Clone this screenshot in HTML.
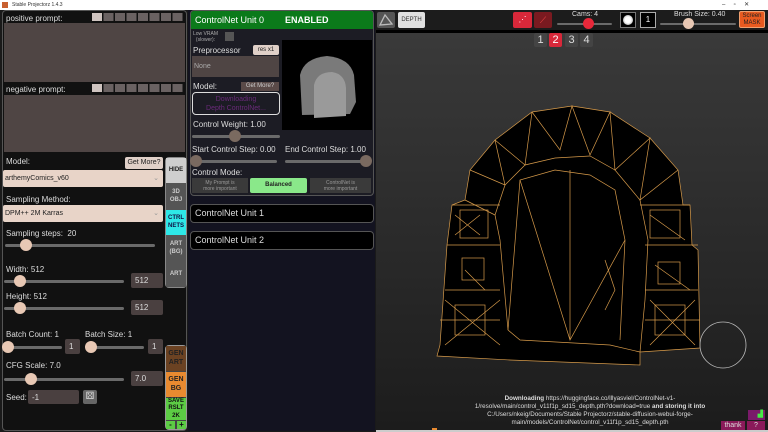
<!DOCTYPE html><html><head><style>
*{box-sizing:border-box;margin:0;padding:0}
body{width:768px;height:432px;overflow:hidden;background:#1a1a1a;font-family:"Liberation Sans",sans-serif;color:#ddd;position:relative;font-size:8px}
.a{position:absolute}
.lbl{position:absolute;font-size:8px;color:#ddd}
.trk{position:absolute;height:3px;background:#6a6a6a;border-radius:2px}
.kn{position:absolute;width:12px;height:12px;border-radius:50%;background:#e8c8b4}
.box{position:absolute;background:#4a4040;color:#ddd;font-size:8px;padding:3px 4px;border-radius:2px}
.sb{position:absolute;left:166px;width:20px;font-size:6px;font-weight:bold;text-align:center;display:flex;align-items:center;justify-content:center;line-height:1.2}
</style></head><body>
<div class="a" style="left:0;top:0;width:768px;height:10px;background:#fff;color:#333;font-size:5px;padding:2px 0 0 12px">Stable Projectorz 1.4.3<div class="a" style="left:2px;top:2px;width:6px;height:6px;background:#c86030"></div><span class="a" style="left:722px;top:1px;font-size:6px">–&nbsp;&nbsp;&nbsp;&nbsp;&nbsp;▫&nbsp;&nbsp;&nbsp;&nbsp;&nbsp;✕</span></div>
<!-- left panel -->
<div class="a" style="left:2px;top:10px;width:185px;height:421px;background:#111;border:1px solid #555;border-radius:4px"></div>
<div class="lbl" style="left:6px;top:14px">positive prompt:</div>
<div class="a" style="left:92px;top:13px;width:92px;height:8px;background:repeating-linear-gradient(90deg,#6a6262 0 10px,#111 10px 11.5px)"></div>
<div class="a" style="left:92px;top:13px;width:10px;height:8px;background:#cfc4c0"></div>
<div class="a" style="left:4px;top:23px;width:181px;height:59px;background:#4f4544"></div>
<div class="lbl" style="left:6px;top:85px">negative prompt:</div>
<div class="a" style="left:92px;top:84px;width:92px;height:8px;background:repeating-linear-gradient(90deg,#6a6262 0 10px,#111 10px 11.5px)"></div>
<div class="a" style="left:92px;top:84px;width:10px;height:8px;background:#cfc4c0"></div>
<div class="a" style="left:4px;top:95px;width:181px;height:57px;background:#4f4544"></div>
<div class="lbl" style="left:6px;top:157px">Model:</div>
<div class="a" style="left:125px;top:157px;width:38px;height:12px;background:#e0d0c8;color:#222;font-size:7px;text-align:center;line-height:12px;border-radius:2px">Get More?</div>
<div class="a" style="left:3px;top:170px;width:160px;height:17px;background:#e8d4c8;color:#222;font-size:7px;line-height:17px;padding-left:2px;border-radius:2px">arthemyComics_v60<span style="float:right;margin-right:4px;color:#999">⌄</span></div>
<div class="lbl" style="left:6px;top:195px">Sampling Method:</div>
<div class="a" style="left:3px;top:205px;width:160px;height:17px;background:#e8d4c8;color:#222;font-size:7px;line-height:17px;padding-left:2px;border-radius:2px">DPM++ 2M Karras<span style="float:right;margin-right:4px;color:#999">⌄</span></div>
<div class="a" style="left:165px;top:157px;width:22px;height:131px;border:1px solid #888;border-radius:4px;background:#555"></div>
<div class="sb" style="top:158px;height:25px;background:#cfcfcf;color:#222">HIDE</div>
<div class="sb" style="top:184px;height:25px;background:#555;color:#ccc">3D<br>OBJ</div>
<div class="sb" style="top:210px;height:25px;background:#2ee8e8;color:#114">CTRL<br>NETS</div>
<div class="sb" style="top:236px;height:25px;background:#555;color:#ccc">ART<br>(BG)</div>
<div class="sb" style="top:262px;height:25px;background:#555;color:#ccc">ART</div>
<div class="lbl" style="left:6px;top:229px">Sampling steps:&nbsp; 20</div>
<div class="trk" style="left:5px;top:244px;width:150px"></div><div class="kn" style="left:20px;top:239px"></div>
<div class="lbl" style="left:6px;top:265px">Width: 512</div>
<div class="trk" style="left:4px;top:280px;width:120px"></div><div class="kn" style="left:14px;top:275px"></div>
<div class="box" style="left:131px;top:273px;width:32px;height:15px">512</div>
<div class="lbl" style="left:6px;top:292px">Height: 512</div>
<div class="trk" style="left:4px;top:307px;width:120px"></div><div class="kn" style="left:14px;top:302px"></div>
<div class="box" style="left:131px;top:300px;width:32px;height:15px">512</div>
<div class="lbl" style="left:6px;top:330px">Batch Count: 1</div>
<div class="lbl" style="left:85px;top:330px">Batch Size: 1</div>
<div class="trk" style="left:4px;top:346px;width:58px"></div><div class="kn" style="left:2px;top:341px"></div>
<div class="box" style="left:65px;top:339px;width:15px;height:15px">1</div>
<div class="trk" style="left:86px;top:346px;width:58px"></div><div class="kn" style="left:85px;top:341px"></div>
<div class="box" style="left:148px;top:339px;width:15px;height:15px">1</div>
<div class="lbl" style="left:6px;top:361px">CFG Scale: 7.0</div>
<div class="trk" style="left:4px;top:378px;width:120px"></div><div class="kn" style="left:25px;top:373px"></div>
<div class="box" style="left:131px;top:371px;width:32px;height:15px">7.0</div>
<div class="lbl" style="left:6px;top:393px">Seed:</div>
<div class="box" style="left:28px;top:390px;width:51px;height:14px">-1</div>
<div class="a" style="left:83px;top:390px;width:14px;height:14px;background:#666;border-radius:2px;color:#ddd;font-size:10px;text-align:center;line-height:14px">⚄</div>
<div class="a" style="left:165px;top:345px;width:22px;height:85px;border:1px solid #999;border-radius:4px;background:#444"></div>
<div class="sb" style="top:346px;height:25px;background:#6b4222;color:#222;font-size:7px">GEN<br>ART</div>
<div class="sb" style="top:372px;height:25px;background:#e88a30;color:#222;font-size:7px">GEN<br>BG</div>
<div class="sb" style="top:398px;height:22px;background:#5ccc44;color:#111">SAVE<br>RSLT<br>2K</div>
<div class="sb" style="top:421px;width:9px;height:8px;background:#5ccc44;color:#111;font-size:8px">-</div>
<div class="sb" style="left:177px;top:421px;width:9px;height:8px;background:#5ccc44;color:#111;font-size:8px">+</div>
<!-- middle -->
<div class="a" style="left:188px;top:10px;width:187px;height:421px;background:#131320"></div>
<div class="a" style="left:190px;top:10px;width:184px;height:186px;background:#1c1c24;border:1px solid #555;border-radius:4px"></div>
<div class="a" style="left:191px;top:11px;width:182px;height:18px;background:#0b7a1a;border-radius:3px 3px 0 0;font-size:9px;color:#fff;line-height:18px;padding-left:4px">ControlNet Unit 0<b style="position:absolute;left:94px">ENABLED</b></div>
<div class="a" style="left:193px;top:31px;font-size:5px;color:#aaa;text-align:center;line-height:6px">Low VRAM<br>(slower):</div>
<div class="a" style="left:225px;top:32px;width:9px;height:9px;background:#555"></div>
<div class="lbl" style="left:193px;top:46px">Preprocessor</div>
<div class="a" style="left:253px;top:45px;width:26px;height:10px;background:#e0d0c8;color:#222;font-size:6px;text-align:center;line-height:10px;border-radius:2px">res x1</div>
<div class="a" style="left:192px;top:56px;width:87px;height:21px;background:#4f4544;color:#aaa;font-size:7px;line-height:21px;padding-left:2px">None</div>
<div class="lbl" style="left:193px;top:82px">Model:</div>
<div class="a" style="left:241px;top:82px;width:38px;height:9px;background:#5a4a48;color:#ccc;font-size:6px;text-align:center;line-height:9px">Get More?</div>
<div class="a" style="left:192px;top:92px;width:88px;height:23px;border:1px solid #ddd;border-radius:4px;color:#6a2a7a;font-size:7px;text-align:center;line-height:9px;padding-top:2px">Downloading<br>Depth ControlNet...</div>
<div class="a" style="left:282px;top:40px;width:90px;height:90px;background:#000"></div>
<svg class="a" style="left:282px;top:40px" width="90" height="90"><path d="M20 75 L18 35 Q22 18 45 16 Q68 18 72 35 L74 62 L68 74 Z" fill="#7a7a7a"/><path d="M32 78 L32 45 Q35 32 50 32 Q63 34 64 48 L64 76 Z" fill="#9a9a9a"/></svg>
<div class="lbl" style="left:193px;top:120px">Control Weight: 1.00</div>
<div class="trk" style="left:192px;top:135px;width:88px"></div><div class="kn" style="left:229px;top:130px;background:#7a6a60"></div>
<div class="lbl" style="left:192px;top:145px">Start Control Step: 0.00</div>
<div class="lbl" style="left:285px;top:145px">End Control Step: 1.00</div>
<div class="trk" style="left:192px;top:160px;width:85px"></div><div class="kn" style="left:190px;top:155px;background:#7a6a60"></div>
<div class="trk" style="left:285px;top:160px;width:85px"></div><div class="kn" style="left:360px;top:155px;background:#7a6a60"></div>
<div class="lbl" style="left:192px;top:168px">Control Mode:</div>
<div class="a" style="left:192px;top:178px;width:56px;height:15px;background:#3a3a3a;color:#999;font-size:5px;text-align:center;line-height:6px;padding-top:2px">My Prompt is<br>more important</div>
<div class="a" style="left:250px;top:178px;width:57px;height:15px;background:#8ae88a;color:#222;font-size:6px;font-weight:bold;text-align:center;line-height:15px;border-radius:2px">Balanced</div>
<div class="a" style="left:310px;top:178px;width:61px;height:15px;background:#3a3a3a;color:#999;font-size:5px;text-align:center;line-height:6px;padding-top:2px">ControlNet is<br>more important</div>
<div class="a" style="left:190px;top:204px;width:184px;height:19px;background:#000;border:1px solid #555;border-radius:4px;font-size:9px;line-height:17px;padding-left:4px">ControlNet Unit 1</div>
<div class="a" style="left:190px;top:231px;width:184px;height:19px;background:#000;border:1px solid #555;border-radius:4px;font-size:9px;line-height:17px;padding-left:4px">ControlNet Unit 2</div>
<!-- right -->
<div class="a" style="left:376px;top:10px;width:392px;height:20px;background:#1c1c1c"></div>
<div class="a" style="left:376px;top:30px;width:392px;height:400px;background:linear-gradient(#3a3a3a,#1c1c1c)"></div>
<div class="a" style="left:377px;top:12px;width:18px;height:16px;background:#555;border-radius:2px"></div>
<svg class="a" style="left:377px;top:12px" width="18" height="16"><path d="M3 13 L8 3 L15 12 Z" fill="none" stroke="#bbb" stroke-width="1.3"/></svg>
<div class="a" style="left:398px;top:12px;width:27px;height:16px;background:#e0e0e0;color:#333;font-size:6px;text-align:center;line-height:16px;border-radius:2px">DEPTH</div>
<div class="a" style="left:513px;top:12px;width:19px;height:16px;background:#d8283a;border-radius:2px;color:#fff;font-size:8px;text-align:center;line-height:16px">⋰</div>
<div class="a" style="left:534px;top:12px;width:18px;height:16px;background:#7a1a20;border-radius:2px;color:#e44;font-size:9px;text-align:center;line-height:16px">⟋</div>
<div class="lbl" style="left:572px;top:11px;font-size:7px">Cams: 4</div>
<div class="trk" style="left:557px;top:23px;width:55px;height:2px"></div><div class="kn" style="left:583px;top:18px;width:11px;height:11px;background:#e8283a"></div>
<div class="a" style="left:620px;top:12px;width:16px;height:16px;background:#000;border:1px solid #777"><div style="margin:2px;width:10px;height:10px;border-radius:50%;background:radial-gradient(#fff 40%,#888)"></div></div>
<div class="a" style="left:640px;top:12px;width:16px;height:16px;background:#000;border:1px solid #aaa;color:#fff;font-size:8px;text-align:center;line-height:14px">1</div>
<div class="lbl" style="left:674px;top:11px;font-size:7px">Brush Size: 0.40</div>
<div class="trk" style="left:660px;top:23px;width:76px;height:2px"></div><div class="kn" style="left:683px;top:18px;width:11px;height:11px"></div>
<div class="a" style="left:739px;top:11px;width:26px;height:17px;background:#e85a20;border:1px solid #f0a070;border-radius:2px;color:#222;font-size:6px;text-align:center;line-height:7px;padding-top:1px">Screen<br>MASK</div>
<div class="a" style="left:376px;top:30px;width:392px;height:3px;background:#000"></div>
<div class="a" style="left:534px;top:33px;width:13px;height:14px;background:#444;color:#ddd;font-size:11px;text-align:center;line-height:14px;border-radius:2px">1</div>
<div class="a" style="left:549px;top:33px;width:13px;height:14px;background:#d8283a;color:#fff;font-size:11px;text-align:center;line-height:14px;border-radius:2px">2</div>
<div class="a" style="left:565px;top:33px;width:13px;height:14px;background:#444;color:#ddd;font-size:11px;text-align:center;line-height:14px;border-radius:2px">3</div>
<div class="a" style="left:580px;top:33px;width:13px;height:14px;background:#444;color:#ddd;font-size:11px;text-align:center;line-height:14px;border-radius:2px">4</div>
<svg class="a" style="left:376px;top:30px" width="392" height="400">
<g transform="translate(-376,-30)">
<path d="M532 112 L572 106 L610 112 L650 138 L678 170 L683 205 L690 205 L692 245 L698 250 L700 348 L640 352 L640 365 L510 360 L437 356 L440 345 L447 245 L452 205 L465 200 L470 170 L495 140 Z" fill="#000"/>
<g fill="none" stroke="#d69a4a" stroke-width="0.7">
<path d="M532 112 L572 106 L610 112 L650 138 L678 170 L683 205 L690 205 L692 245 L698 250 L700 348 L640 352 L640 365 L510 360 L437 356 L440 345 L447 245 L452 205 L465 200 L470 170 L495 140 Z"/>
<path d="M555 158 L590 156 L615 170 L640 200 L648 240 L645 300 L640 352"/>
<path d="M555 158 L525 165 L505 185 L495 215 L500 240 L508 330 L520 340 L610 345 L640 352"/>
<path d="M508 330 L520 180 L555 170 L590 175 L615 190 L625 240 L620 340"/>
<path d="M570 170 L570 340 M520 180 L570 340 L625 240 M532 112 L560 150 L572 106 L590 155 L610 112 L615 170 L650 138 L640 200 L678 170 M495 140 L525 165 L532 112 M470 170 L505 185 L495 140 M465 200 L495 215"/>
<path d="M452 205 L500 205 M447 245 L500 245 M445 290 L500 290 M440 320 L500 320 M640 205 L690 205 M645 245 L698 245 M645 290 L698 290 M645 320 L700 320"/>
<path d="M455 215 L480 235 M480 215 L455 235 M465 270 L485 290 M445 300 L500 345 M500 300 L445 345 M650 215 L685 240 M655 265 L690 290 M650 300 L695 345 M695 300 L650 345 M605 260 L615 290 L605 310"/>
<rect x="462" y="258" width="22" height="22"/><rect x="658" y="262" width="22" height="22"/><rect x="460" y="210" width="28" height="28"/><rect x="650" y="210" width="30" height="28"/><rect x="455" y="305" width="30" height="30"/><rect x="655" y="305" width="30" height="30"/>
</g></g>
<circle cx="347" cy="315" r="23" fill="none" stroke="#bbb" stroke-width="0.8"/>
</svg>
<div class="a" style="left:430px;top:395px;width:320px;text-align:center;font-size:6.3px;line-height:8px;color:#ddd"><b>Downloading</b> https://huggingface.co/lllyasviel/ControlNet-v1-<br>1/resolve/main/control_v11f1p_sd15_depth.pth?download=true <b>and storing it into</b><br>C:/Users/nkeig/Documents/Stable Projectorz/stable-diffusion-webui-forge-<br>main/models/ControlNet/control_v11f1p_sd15_depth.pth</div>
<div class="a" style="left:748px;top:410px;width:17px;height:10px;background:#7a1a6a;color:#4e4;font-size:7px;text-align:right;padding-right:2px">▟</div>
<div class="a" style="left:721px;top:421px;width:24px;height:10px;background:#8a1a5a;color:#ddd;font-size:7px;text-align:center;line-height:10px">thank</div>
<div class="a" style="left:747px;top:421px;width:18px;height:10px;background:#8a1a5a;color:#ddd;font-size:7px;text-align:center;line-height:10px">?</div>
<div class="a" style="left:376px;top:430px;width:392px;height:2px;background:#ccc"></div>
<div class="a" style="left:432px;top:428px;width:5px;height:2px;background:#e88a30"></div>
</body></html>
